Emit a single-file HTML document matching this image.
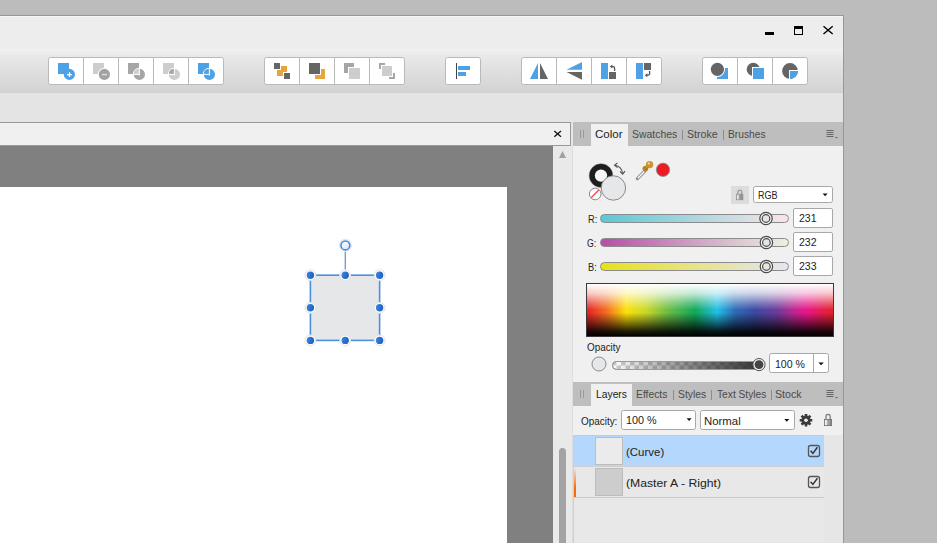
<!DOCTYPE html>
<html><head><meta charset="utf-8">
<style>
*{margin:0;padding:0;box-sizing:border-box}
html,body{width:937px;height:543px;overflow:hidden;background:#bcbcbc;font-family:"Liberation Sans",sans-serif;color:#222;position:relative}
.a{position:absolute}
.t{position:absolute;line-height:1;white-space:pre;transform-origin:0 0}
</style></head><body>
<!-- window frame -->
<div class="a" style="left:0;top:15px;width:844px;height:1px;background:#979797"></div>
<div class="a" style="left:843px;top:15px;width:1px;height:528px;background:#979797"></div>
<div class="a" style="left:0;top:16px;width:843px;height:36px;background:#ededed"></div>
<div class="a" style="left:0;top:16px;width:843px;height:1px;background:#f5f5f5"></div>
<!-- toolbar gradient -->
<div class="a" style="left:0;top:49px;width:843px;height:44px;background:linear-gradient(#f1f1f1,#e9e9e9 15%,#d2d2d2)"></div>
<!-- context toolbar -->
<div class="a" style="left:0;top:93px;width:843px;height:29px;background:#e4e4e4"></div>
<!-- doc tab -->
<div class="a" style="left:0;top:122px;width:571px;height:24px;background:#f0f0f0;border:1px solid #9a9a9a;border-left:none"></div>
<svg class="a" style="left:0;top:0" width="937" height="543"><path d="M554.3 131L561 136.8M561 131L554.3 136.8" stroke="#111" stroke-width="1.3"/></svg>
<!-- canvas -->
<div class="a" style="left:0;top:146px;width:553px;height:397px;background:#808080"></div>
<div class="a" style="left:0;top:187px;width:507px;height:356px;background:#ffffff"></div>
<!-- v scrollbar -->
<div class="a" style="left:553px;top:146px;width:19px;height:397px;background:#e9e9e9"></div>
<div class="a" style="left:571px;top:122px;width:2px;height:24px;background:#e6e6e6"></div>
<div class="a" style="left:572px;top:146px;width:1px;height:397px;background:#dedede"></div>
<svg class="a" style="left:0;top:0" width="937" height="543"><path d="M559 158L562.5 151L566 158Z" fill="#a0a0a0"/></svg>
<div class="a" style="left:559px;top:448px;width:7px;height:100px;border-radius:3.5px;background:#a3a3a3"></div>
<!-- right panel -->
<div class="a" style="left:573px;top:122px;width:270px;height:421px;background:#f0f0f0"></div>
<div class="a" style="left:573px;top:122px;width:270px;height:24px;background:#bebebe"></div>
<div class="a" style="left:591px;top:124px;width:37px;height:22px;background:#f0f0f0"></div>
<div class="a" style="left:573px;top:382px;width:270px;height:24px;background:#bebebe"></div>
<div class="a" style="left:591px;top:384px;width:41px;height:22px;background:#f0f0f0"></div>
<!-- tab separators and grips -->
<div class="a" style="left:682px;top:130px;width:1px;height:10px;background:#8c8c8c"></div>
<div class="a" style="left:723px;top:130px;width:1px;height:10px;background:#8c8c8c"></div>
<div class="a" style="left:673px;top:390px;width:1px;height:10px;background:#8c8c8c"></div>
<div class="a" style="left:711px;top:390px;width:1px;height:10px;background:#8c8c8c"></div>
<div class="a" style="left:771px;top:390px;width:1px;height:10px;background:#8c8c8c"></div>
<div class="a" style="left:580px;top:130px;width:1px;height:8px;background:#9a9a9a"></div>
<div class="a" style="left:583px;top:130px;width:1px;height:8px;background:#9a9a9a"></div>
<div class="a" style="left:580px;top:390px;width:1px;height:8px;background:#9a9a9a"></div>
<div class="a" style="left:583px;top:390px;width:1px;height:8px;background:#9a9a9a"></div>
<svg class="a" style="left:0;top:0" width="937" height="543">
<path d="M826.5 130.5h7M826.5 132.5h7M826.5 134.5h7M826.5 136.5h7" stroke="#666" stroke-width="1"/>
<path d="M835 137h3l-1.5 1.5z" fill="#666"/>
<path d="M826.5 390.5h7M826.5 392.5h7M826.5 394.5h7M826.5 396.5h7" stroke="#666" stroke-width="1"/>
<path d="M835 397h3l-1.5 1.5z" fill="#666"/>
</svg>
<!-- layers list -->
<div class="a" style="left:573px;top:435px;width:270px;height:108px;background:#e8e8e8"></div>
<div class="a" style="left:573px;top:435px;width:251px;height:1px;background:#cacaca"></div>
<div class="a" style="left:574px;top:436px;width:250px;height:30px;background:#b3d7fd"></div>
<div class="a" style="left:574px;top:466px;width:250px;height:1px;background:#d0d0d0"></div>
<div class="a" style="left:574px;top:497px;width:250px;height:1px;background:#cacaca"></div>
<div class="a" style="left:824px;top:435px;width:19px;height:108px;background:#e6e6e6"></div>
<div class="a" style="left:573px;top:435px;width:1px;height:108px;background:#cfcfcf"></div>
<div class="a" style="left:574px;top:468px;width:2px;height:29px;background:linear-gradient(rgba(255,106,0,0),#ff6a00 70%)"></div>
<div class="a" style="left:595px;top:437px;width:28px;height:28px;background:#ebebeb;border:1px solid #bdbdbd"></div>
<div class="a" style="left:595px;top:468px;width:28px;height:28px;background:#cdcdcd;border:1px solid #bdbdbd"></div>
<svg class="a" style="left:0;top:0" width="937" height="543">
<rect x="808.5" y="445.5" width="11" height="11" rx="2" fill="none" stroke="#555" stroke-width="1.3"/>
<path d="M810.6 450.8L812.9 453.4L817.4 447.2" fill="none" stroke="#333" stroke-width="1.5"/>
<rect x="808.5" y="476.5" width="11" height="11" rx="2" fill="none" stroke="#555" stroke-width="1.3"/>
<path d="M810.6 481.8L812.9 484.4L817.4 478.2" fill="none" stroke="#333" stroke-width="1.5"/>
</svg>

<svg class="a" style="left:0;top:0" width="937" height="543" viewBox="0 0 937 543">
<!-- window controls -->
<rect x="765" y="32" width="9" height="3" fill="#000"/>
<rect x="794.5" y="26.5" width="8" height="8" fill="none" stroke="#000"/>
<rect x="794" y="26" width="9" height="3" fill="#000"/>
<path d="M823.5 26.3L832.7 34M832.7 26.3L823.5 34" stroke="#000" stroke-width="1.4"/>
<!-- groups -->
<rect x="48.5" y="57.5" width="175" height="27" rx="2" fill="#fff" stroke="#b9b9b9"/>
<path d="M83.5 58V84M118.5 58V84M153.5 58V84M188.5 58V84" stroke="#b9b9b9"/>
<rect x="264.5" y="57.5" width="140" height="27" rx="2" fill="#fff" stroke="#b9b9b9"/>
<path d="M299.5 58V84M334.5 58V84M369.5 58V84" stroke="#b9b9b9"/>
<rect x="445.5" y="57.5" width="35" height="27" rx="2" fill="#fff" stroke="#b9b9b9"/>
<rect x="521.5" y="57.5" width="140" height="27" rx="2" fill="#fff" stroke="#b9b9b9"/>
<path d="M556.5 58V84M591.5 58V84M626.5 58V84" stroke="#b9b9b9"/>
<rect x="702.5" y="57.5" width="105" height="27" rx="2" fill="#fff" stroke="#b9b9b9"/>
<path d="M737.5 58V84M772.5 58V84" stroke="#b9b9b9"/>
<!-- add -->
<rect x="58" y="63" width="11" height="11" fill="#4fa1e5"/>
<circle cx="69.4" cy="74.4" r="5.6" fill="#4fa1e5"/>
<path d="M67 74.6h5M69.5 72.1v5" stroke="#fff" stroke-width="1.2"/>
<!-- subtract -->
<rect x="93" y="63" width="11" height="11" fill="#cdcdcd"/>
<circle cx="104.4" cy="74.4" r="6.6" fill="#fff"/>
<circle cx="104.4" cy="74.4" r="5.6" fill="#a3a3a3"/>
<path d="M102 74.6h5" stroke="#e6e6e6" stroke-width="1.2"/>
<!-- intersect -->
<rect x="128" y="63" width="11" height="11" fill="#a6a6a6"/>
<circle cx="139.4" cy="74.4" r="6.6" fill="#fff"/>
<circle cx="139.4" cy="74.4" r="5.6" fill="#a6a6a6"/>
<path d="M139 74V68.8A5.6 5.6 0 0 0 133.8 74Z" fill="#cfcfcf"/>
<path d="M139.4 68V75.4M133 74.4H140" stroke="#fff" stroke-width="1"/>
<!-- divide -->
<rect x="163" y="63" width="11" height="11" fill="#cdcdcd"/>
<circle cx="174.4" cy="74.4" r="6.6" fill="#fff"/>
<circle cx="174.4" cy="74.4" r="5.6" fill="#cdcdcd"/>
<path d="M174 74V68.8A5.6 5.6 0 0 0 168.8 74Z" fill="#a6a6a6"/>
<path d="M174.4 68V75.4M168 74.4H175" stroke="#fff" stroke-width="1"/>
<!-- xor -->
<rect x="198" y="63" width="11" height="11" fill="#4fa1e5"/>
<circle cx="209.4" cy="74.4" r="6.6" fill="#fff"/>
<circle cx="209.4" cy="74.4" r="5.6" fill="#4fa1e5"/>
<path d="M209 74V68.8A5.6 5.6 0 0 0 203.8 74Z" fill="#4fa1e5"/>
<path d="M209.4 68V75.4M203 74.4H210" stroke="#fff" stroke-width="1"/>
<!-- group2 -->
<rect x="277" y="66" width="10" height="10" fill="#e8a53e"/>
<rect x="273" y="62" width="8" height="8" fill="#fff"/><rect x="283" y="72" width="8" height="8" fill="#fff"/>
<rect x="274" y="63" width="6" height="6" fill="#656565"/><rect x="284" y="73" width="6" height="6" fill="#656565"/>
<rect x="315" y="69" width="10" height="10" fill="#e8a53e"/>
<rect x="308" y="62" width="13" height="13" fill="#fff"/>
<rect x="309" y="63" width="11" height="11" fill="#656565"/>
<rect x="344" y="63" width="10" height="10" fill="#a6a6a6"/>
<rect x="348" y="67" width="13" height="13" fill="#fff"/>
<rect x="349" y="68" width="11" height="11" fill="#cdcdcd"/>
<path d="M379 63h6v2h-4v4h-2z" fill="#a6a6a6"/>
<rect x="382" y="66" width="10" height="10" fill="#cdcdcd"/>
<path d="M395 79h-6v-2h4v-4h2z" fill="#a6a6a6"/>
<!-- align left -->
<rect x="456" y="63" width="1" height="16" fill="#444"/>
<rect x="458" y="66" width="12" height="4" fill="#4fa1e5"/>
<rect x="458" y="72" width="8" height="4" fill="#4fa1e5"/>
<!-- flips -->
<path d="M530 79L538 63V79Z" fill="#4fa1e5"/><path d="M540 63V79H548Z" fill="#656565"/>
<path d="M566.5 69.8L582 62V69.8Z" fill="#4fa1e5"/><path d="M566.5 72H582V79.8Z" fill="#656565"/>
<!-- rotate -->
<rect x="601" y="63" width="7" height="16" fill="#4fa1e5"/>
<rect x="609" y="72" width="7" height="7" fill="#656565"/>
<path d="M614.6 71V68Q614.6 66.6 613.2 66.6H611.5" fill="none" stroke="#555" stroke-width="1.3"/>
<path d="M609.8 66.6L612.3 64.6V68.6Z" fill="#555"/>
<rect x="636" y="63" width="7" height="16" fill="#4fa1e5"/>
<rect x="644" y="63" width="7" height="7" fill="#656565"/>
<path d="M649.6 71V73.8Q649.6 75.2 648.2 75.2H646.5" fill="none" stroke="#555" stroke-width="1.3"/>
<path d="M644.8 75.2L647.3 73.2V77.2Z" fill="#555"/>
<!-- group5 -->
<rect x="717" y="68" width="11" height="11" fill="#4fa1e5"/>
<circle cx="717.4" cy="69.3" r="7.6" fill="#fff"/>
<circle cx="717.4" cy="69.3" r="6.6" fill="#656565"/>
<circle cx="753.3" cy="69.3" r="6.6" fill="#656565"/>
<rect x="752" y="67" width="12" height="12" fill="#fff"/>
<rect x="753" y="68" width="11" height="11" fill="#4fa1e5"/>
<circle cx="790" cy="71" r="7.9" fill="#656565"/>
<path d="M790 71H797.9A7.9 7.9 0 0 1 790 78.9Z" fill="#4fa1e5"/>
<path d="M789.5 70V80M789 70.5H799" stroke="#fff" stroke-width="1"/>
</svg>
<div class="a" style="left:586px;top:283px;width:248px;height:54px;border:1px solid #3a3a3a;background:linear-gradient(to bottom,#fff 0%,rgba(255,255,255,0.75) 18%,rgba(255,255,255,0.3) 36%,rgba(255,255,255,0) 50%,rgba(0,0,0,0) 55%,rgba(0,0,0,0.4) 72%,rgba(0,0,0,0.85) 90%,#000 100%),linear-gradient(to right,#e42128 0%,#f36f21 8%,#fbe20a 16%,#c8d82a 24%,#6cbd45 33%,#10a85a 44%,#22bfe8 53%,#2d6cb8 60%,#3a4aa2 68%,#6a3c9a 77%,#b02a92 83%,#e8168a 89%,#e42128 100%)"></div>
<svg class="a" style="left:0;top:0" width="937" height="543" viewBox="0 0 937 543">
<defs>
<linearGradient id="gr" x1="0" x2="1"><stop offset="0" stop-color="#5cc7d6"/><stop offset="1" stop-color="#fbe5e8"/></linearGradient>
<linearGradient id="gg" x1="0" x2="1"><stop offset="0" stop-color="#b64ea6"/><stop offset="1" stop-color="#e8f3e2"/></linearGradient>
<linearGradient id="gb" x1="0" x2="1"><stop offset="0" stop-color="#e8e11a"/><stop offset="1" stop-color="#e6e5f6"/></linearGradient>
<linearGradient id="go" x1="0" x2="1"><stop offset="0" stop-color="#000" stop-opacity="0"/><stop offset="1" stop-color="#333" stop-opacity="1"/></linearGradient>
<pattern id="chk" width="9" height="9" patternUnits="userSpaceOnUse" x="612" y="361"><rect width="9" height="9" fill="#fff"/><rect width="4.5" height="4.5" fill="#cfcfcf"/><rect x="4.5" y="4.5" width="4.5" height="4.5" fill="#cfcfcf"/></pattern>
<linearGradient id="glock" x1="0" x2="1"><stop offset="0" stop-color="#c8c8c8"/><stop offset="0.5" stop-color="#f0f0f0"/><stop offset="1" stop-color="#9a9a9a"/></linearGradient>
</defs>
<!-- stroke ring / fill -->
<circle cx="601" cy="175.6" r="9" fill="#f7f7f7" stroke="#1e1e1e" stroke-width="5.6"/>
<circle cx="601" cy="175.6" r="11.9" fill="none" stroke="#777" stroke-width="0.4"/>
<circle cx="613.4" cy="188" r="12.2" fill="#e6e7e9" stroke="#8a8a8a" stroke-width="1"/>
<circle cx="595.2" cy="194" r="5.8" fill="#fff" stroke="#8a8a8a" stroke-width="1"/>
<path d="M591.4 197.6L598.8 189.9" stroke="#ff4a4a" stroke-width="1.4"/>
<path d="M614.8 165.3Q621.8 166.2 622.6 173.8" fill="none" stroke="#505050" stroke-width="1.1"/>
<path d="M617.4 162.9L614.6 165.3L617.6 167.5" fill="none" stroke="#505050" stroke-width="1.1"/>
<path d="M620.1 171.4L622.6 174.2L625 171.2" fill="none" stroke="#505050" stroke-width="1.1"/>
<!-- eyedropper -->
<path d="M637.4 178.6L644.6 171.4" stroke="#8a8a8a" stroke-width="3.2" stroke-linecap="round"/>
<path d="M637.8 178.2L644.4 171.6" stroke="#fafafa" stroke-width="1.4"/>
<circle cx="645.4" cy="168.6" r="2.9" fill="#b98627"/>
<circle cx="649.6" cy="164.6" r="3.7" fill="#c9952f"/>
<path d="M644.6 170.6L647.4 167.8" stroke="#9b6e1c" stroke-width="0.8"/>
<circle cx="648.8" cy="163.4" r="1.1" fill="#f6dc9a"/>
<circle cx="663" cy="169.8" r="6.7" fill="#ec1c24" stroke="#8d8d8d" stroke-width="0.8"/>
<!-- lock btn -->
<rect x="731" y="186" width="18" height="18" fill="#dcdcdc"/>
<defs><linearGradient id="glock3" x1="0" x2="1"><stop offset="0" stop-color="#cfcfcf"/><stop offset="0.25" stop-color="#f2f2f2"/><stop offset="0.45" stop-color="#a0a0a0"/><stop offset="1" stop-color="#8a8a8a"/></linearGradient></defs>
<path d="M737.9 194.3V191.8Q737.9 190.4 739.3 190.4H740.3Q741.7 190.4 741.7 191.8V194.3" fill="none" stroke="#9a9a9a" stroke-width="1.3"/>
<rect x="736.5" y="194.2" width="6.4" height="5.6" fill="url(#glock3)" stroke="#8a8a8a" stroke-width="0.7"/>
<!-- RGB dropdown -->
<rect x="753.5" y="186.5" width="79" height="16" rx="2" fill="#fff" stroke="#a8a8a8"/>
<path d="M822.6 193.4h5l-2.5 2.8z" fill="#111"/>
<!-- number boxes -->
<rect x="793.5" y="208.5" width="39" height="19" rx="1.5" fill="#fff" stroke="#a8a8a8"/>
<rect x="793.5" y="232.5" width="39" height="19" rx="1.5" fill="#fff" stroke="#a8a8a8"/>
<rect x="793.5" y="256.5" width="39" height="19" rx="1.5" fill="#fff" stroke="#a8a8a8"/>
<!-- sliders -->
<rect x="600.5" y="214.5" width="188" height="8" rx="4" fill="url(#gr)" stroke="#8c8c8c"/>
<rect x="600.5" y="238.5" width="188" height="8" rx="4" fill="url(#gg)" stroke="#8c8c8c"/>
<rect x="600.5" y="262.5" width="188" height="8" rx="4" fill="url(#gb)" stroke="#8c8c8c"/>
<g fill="#e8e4e6" stroke="#4a4a4a" stroke-width="1.2">
<circle cx="766" cy="218.5" r="6.2" fill="#f4f4f4"/><circle cx="766" cy="218.5" r="3.8"/>
<circle cx="766.4" cy="242.5" r="6.2" fill="#f4f4f4"/><circle cx="766.4" cy="242.5" r="3.8" fill="#e6e4e2"/>
<circle cx="766.4" cy="266.5" r="6.2" fill="#f4f4f4"/><circle cx="766.4" cy="266.5" r="3.8" fill="#e6e6e0"/>
</g>
<!-- opacity -->
<circle cx="599" cy="364" r="7" fill="#e6e7e9" stroke="#8a8a8a" stroke-width="1"/>
<rect x="612.5" y="361.5" width="152" height="8" rx="4" fill="url(#chk)" stroke="#9a9a9a"/>
<rect x="612.5" y="361.5" width="152" height="8" rx="4" fill="url(#go)"/>
<rect x="612.5" y="361.5" width="152" height="8" rx="4" fill="none" stroke="#9a9a9a"/>
<circle cx="759" cy="364.6" r="6.1" fill="#f0f0f0" stroke="#555" stroke-width="1"/>
<circle cx="759" cy="364.6" r="4.4" fill="#444"/>
<rect x="769.5" y="353.5" width="59" height="19" rx="2" fill="#fff" stroke="#a8a8a8"/>
<path d="M813.5 354V372" stroke="#a8a8a8"/>
<path d="M818.4 362.4h5.4l-2.7 2.8z" fill="#111"/>
<!-- layers controls -->
<rect x="621.5" y="410.5" width="74" height="19" rx="2" fill="#fff" stroke="#a8a8a8"/>
<path d="M686.6 418.2h5l-2.5 2.8z" fill="#111"/>
<rect x="700.5" y="410.5" width="94" height="19" rx="2" fill="#fff" stroke="#a8a8a8"/>
<path d="M784.3 419h5l-2.5 2.8z" fill="#111"/>
<g transform="translate(806,420.2)" fill="#3a3a3a">
<circle r="4.6"/>
<path d="M-1.3 -6.3h2.6v2.4h-2.6zM-1.3 3.9h2.6v2.4h-2.6zM-6.3 -1.3h2.4v2.6h-2.4zM3.9 -1.3h2.4v2.6h-2.4z"/>
<path d="M-1.3 -6.3h2.6v2.4h-2.6zM-1.3 3.9h2.6v2.4h-2.6zM-6.3 -1.3h2.4v2.6h-2.4zM3.9 -1.3h2.4v2.6h-2.4z" transform="rotate(45)"/>
<circle r="1.8" fill="#f0f0f0"/>
</g>
<defs><linearGradient id="glock2" x1="0" x2="1"><stop offset="0" stop-color="#d8d8d8"/><stop offset="0.22" stop-color="#ffffff"/><stop offset="0.45" stop-color="#a8a8a8"/><stop offset="1" stop-color="#858585"/></linearGradient></defs>
<path d="M826 419.5V416.2Q826 414.5 827.7 414.5H828.5Q830.2 414.5 830.2 416.2V419.5" fill="none" stroke="#858585" stroke-width="1.4"/>
<rect x="824.4" y="419.4" width="7.2" height="6.2" fill="url(#glock2)" stroke="#6e6e6e" stroke-width="0.8"/>
<!-- canvas shape -->
<defs><linearGradient id="hb" x1="0" x2="1" y1="0" y2="0.3"><stop offset="0" stop-color="#4088dc"/><stop offset="1" stop-color="#1f62c4"/></linearGradient>
<linearGradient id="hr" x1="0" x2="1" y1="0" y2="1"><stop offset="0" stop-color="#ffffff"/><stop offset="1" stop-color="#d8e6f8"/></linearGradient></defs>
<rect x="310.4" y="275.2" width="69.2" height="65.2" fill="#e6e7e9" stroke="#4a8fe0" stroke-width="1.6"/>
<path d="M345.3 250V271" stroke="#5a9ae6" stroke-width="1.3"/>
<circle cx="345.4" cy="245.4" r="6" fill="none" stroke="#e6e6e6" stroke-width="1.2"/>
<circle cx="345.4" cy="245.4" r="4.4" fill="url(#hr)" stroke="#3f8ae0" stroke-width="1.6"/>
<g stroke="#e2e2e2" stroke-width="1" fill="#fff">
<circle cx="310.4" cy="275.2" r="5.4"/><circle cx="345.2" cy="275.2" r="5.4"/><circle cx="379.6" cy="275.2" r="5.4"/>
<circle cx="310.4" cy="307.8" r="5.4"/><circle cx="379.6" cy="307.8" r="5.4"/>
<circle cx="310.4" cy="340.4" r="5.4"/><circle cx="345.2" cy="340.4" r="5.4"/><circle cx="379.6" cy="340.4" r="5.4"/>
</g>
<g fill="url(#hb)">
<circle cx="310.4" cy="275.2" r="3.7"/><circle cx="345.2" cy="275.2" r="3.7"/><circle cx="379.6" cy="275.2" r="3.7"/>
<circle cx="310.4" cy="307.8" r="3.7"/><circle cx="379.6" cy="307.8" r="3.7"/>
<circle cx="310.4" cy="340.4" r="3.7"/><circle cx="345.2" cy="340.4" r="3.7"/><circle cx="379.6" cy="340.4" r="3.7"/>
</g>
</svg>

<span class="t" style="left:595.10px;top:129.00px;font-size:11.5px;color:#1c1c1c;transform:scale(1.0038,1);transform-origin:0 9px">Color</span>
<span class="t" style="left:631.69px;top:129.00px;font-size:11.5px;color:#4a4a4a;transform:scale(0.9083,1);transform-origin:0 9px">Swatches</span>
<span class="t" style="left:686.88px;top:129.00px;font-size:11.5px;color:#4a4a4a;transform:scale(0.9250,1);transform-origin:0 9px">Stroke</span>
<span class="t" style="left:728.11px;top:129.00px;font-size:11.5px;color:#4a4a4a;transform:scale(0.8902,1);transform-origin:0 9px">Brushes</span>
<span class="t" style="left:595.70px;top:389.00px;font-size:11.5px;color:#1c1c1c;transform:scale(0.8970,1);transform-origin:0 9px">Layers</span>
<span class="t" style="left:635.80px;top:389.00px;font-size:11.5px;color:#4a4a4a;transform:scale(0.8971,1);transform-origin:0 9px">Effects</span>
<span class="t" style="left:677.60px;top:389.00px;font-size:11.5px;color:#4a4a4a;transform:scale(0.9000,1);transform-origin:0 9px">Styles</span>
<span class="t" style="left:716.70px;top:389.00px;font-size:11.5px;color:#4a4a4a;transform:scale(0.8873,1);transform-origin:0 9px">Text Styles</span>
<span class="t" style="left:775.48px;top:389.00px;font-size:11.5px;color:#4a4a4a;transform:scale(0.9214,1);transform-origin:0 9px">Stock</span>
<span class="t" style="left:587.68px;top:215.00px;font-size:10px;color:#222;transform:scale(0.9250,1);transform-origin:0 8px">R:</span>
<span class="t" style="left:587.30px;top:239.00px;font-size:10px;color:#222;transform:scale(0.8700,1);transform-origin:0 8px">G:</span>
<span class="t" style="left:587.68px;top:263.00px;font-size:10px;color:#222;transform:scale(0.9250,1);transform-origin:0 8px">B:</span>
<span class="t" style="left:757.50px;top:191.00px;font-size:10px;color:#222;transform:scale(0.9000,1);transform-origin:0 8px">RGB</span>
<span class="t" style="left:799.00px;top:213.00px;font-size:11px;color:#222;transform:scale(0.9556,1);transform-origin:0 9px">231</span>
<span class="t" style="left:799.00px;top:237.00px;font-size:11px;color:#222;transform:scale(0.9556,1);transform-origin:0 9px">232</span>
<span class="t" style="left:799.00px;top:261.00px;font-size:11px;color:#222;transform:scale(0.9556,1);transform-origin:0 9px">233</span>
<span class="t" style="left:587.10px;top:343.00px;font-size:10px;color:#222;transform:scale(0.9882,1);transform-origin:0 8px">Opacity</span>
<span class="t" style="left:774.84px;top:359.00px;font-size:11px;color:#222;transform:scale(0.9600,1);transform-origin:0 9px">100 %</span>
<span class="t" style="left:581.20px;top:417.00px;font-size:10px;color:#222;transform:scale(0.9917,1);transform-origin:0 8px">Opacity:</span>
<span class="t" style="left:626.42px;top:415.00px;font-size:11px;color:#222;transform:scale(0.9800,1);transform-origin:0 9px">100 %</span>
<span class="t" style="left:704.36px;top:416.00px;font-size:11px;color:#222;transform:scale(1.0353,1);transform-origin:0 9px">Normal</span>
<span class="t" style="left:626.40px;top:447.00px;font-size:11.5px;color:#222;transform:scale(0.9973,1);transform-origin:0 9px">(Curve)</span>
<span class="t" style="left:626.34px;top:478.00px;font-size:11.5px;color:#222;transform:scale(1.0614,1);transform-origin:0 9px">(Master A - Right)</span>
</body></html>
